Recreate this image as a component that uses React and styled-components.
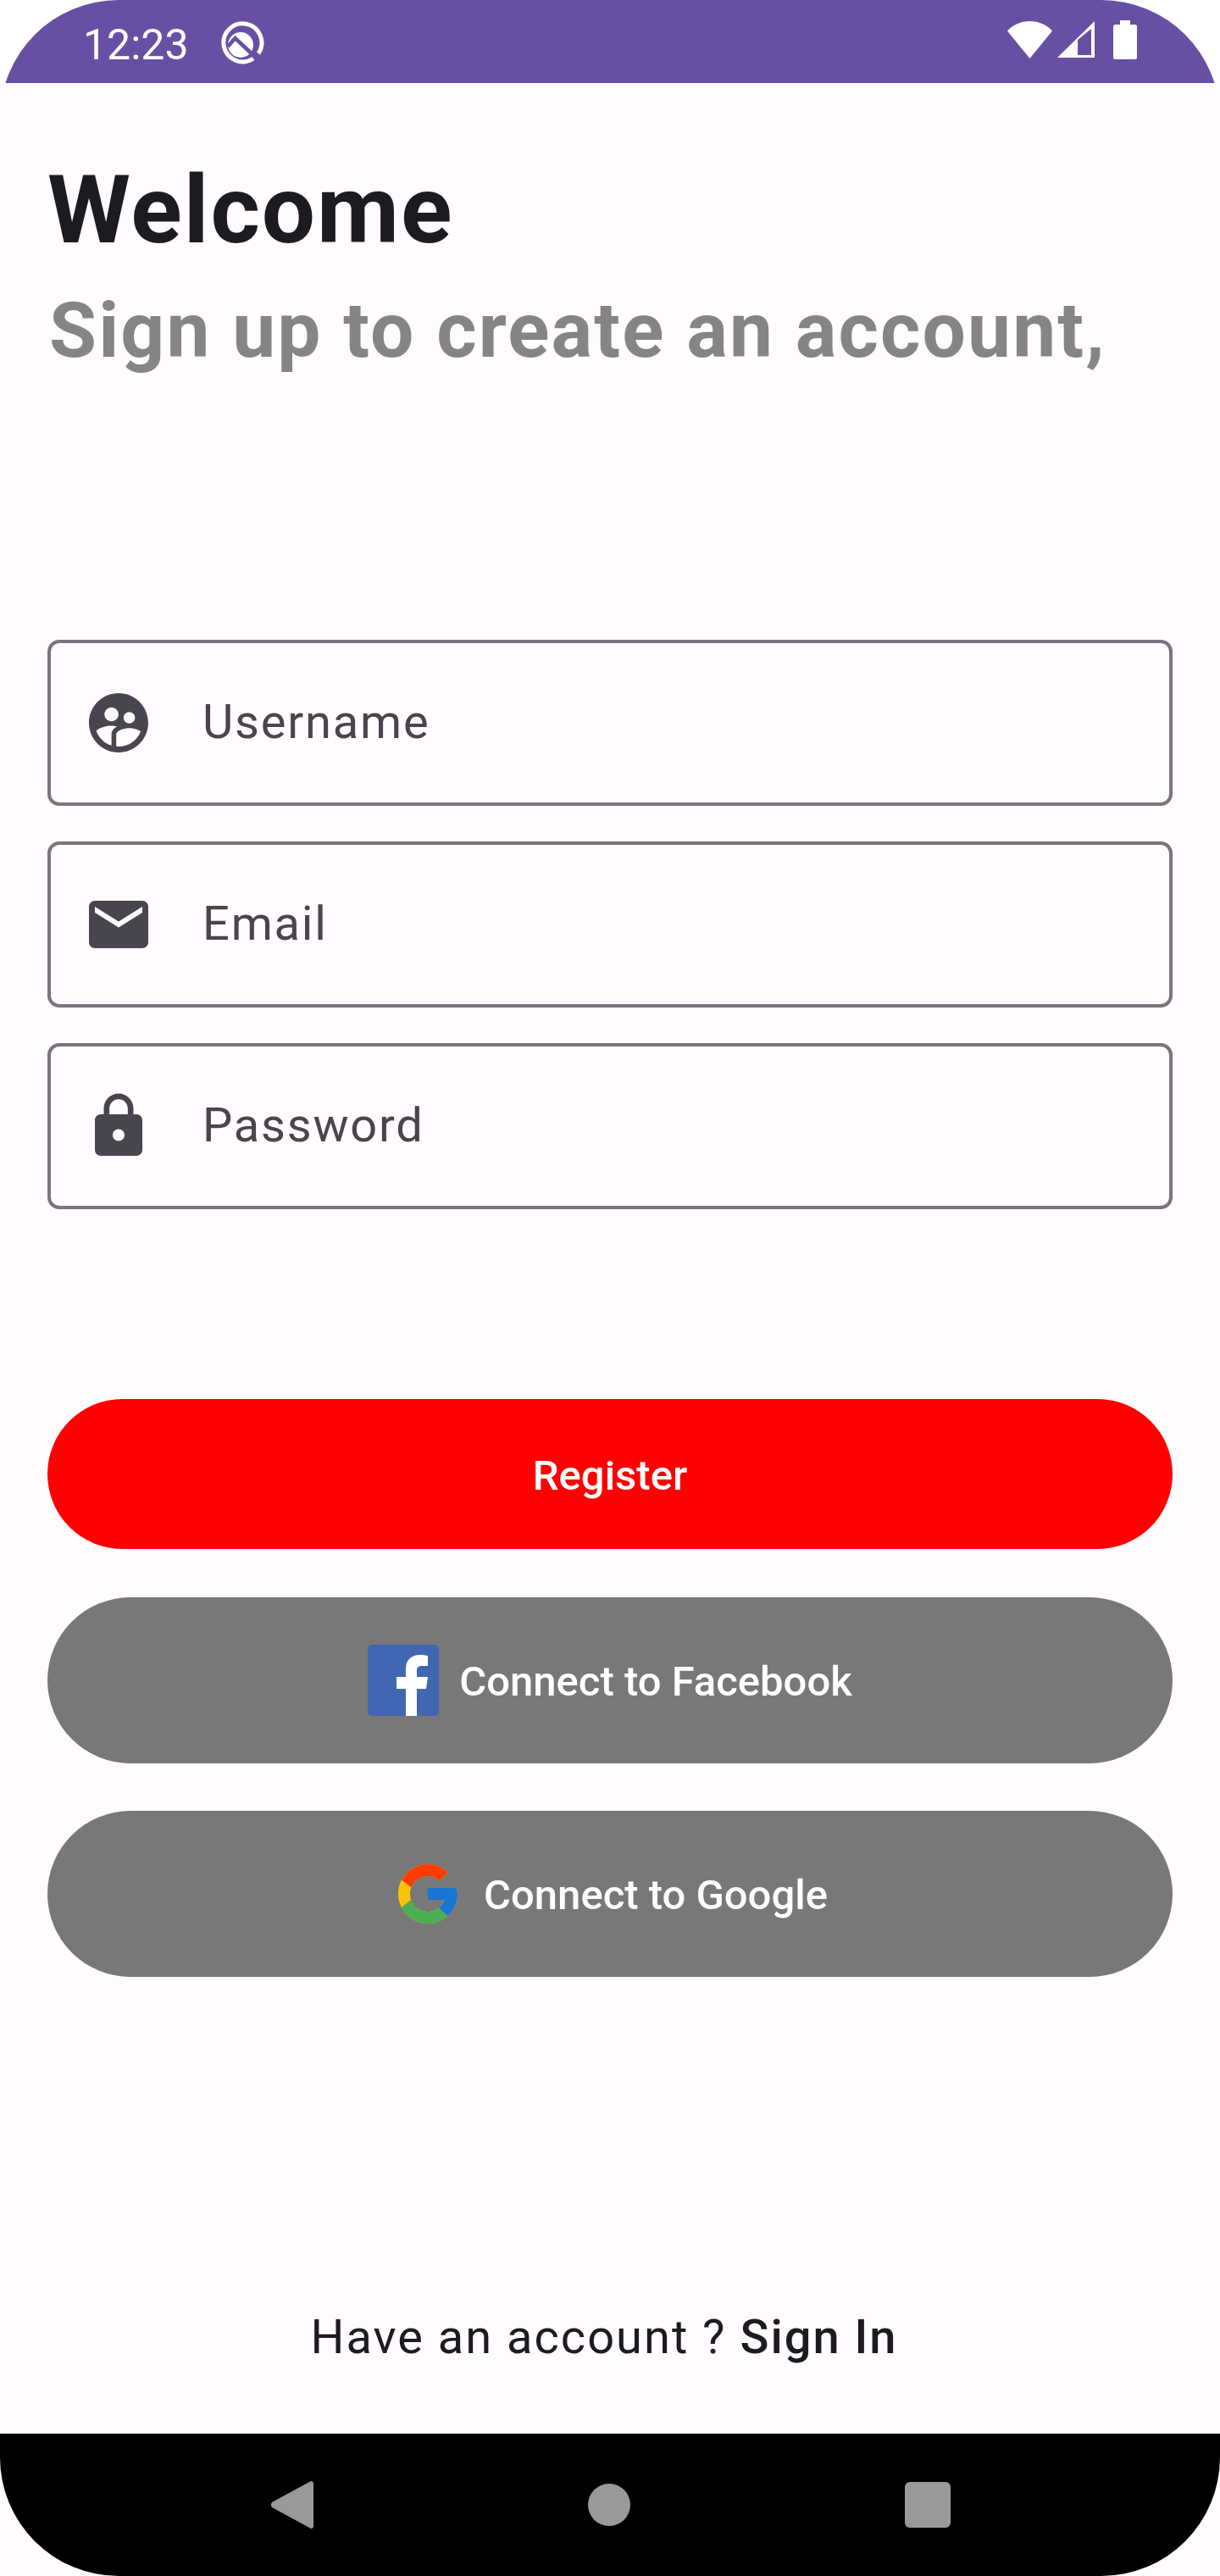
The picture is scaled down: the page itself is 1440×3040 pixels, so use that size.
import styled, { createGlobalStyle } from 'styled-components'
import { MdSupervisedUserCircle, MdEmail, MdLock } from 'react-icons/md'

const GlobalStyle = createGlobalStyle`
	html, body {
		margin: 0;
		padding: 0;
		background: #fff;
	}
	* {
		box-sizing: border-box;
	}
`

const Screen = styled.div`
	display: flex;
	flex-direction: column;
	width: 1440px;
	height: 3040px;
	background: #fffbfe;
	font-family: Roboto, sans-serif;
	overflow: hidden;
`

const StatusClip = styled.div`
	height: 98px;
	flex: none;
	overflow: hidden;
	background: #fff;
`

const StatusBar = styled.div`
	display: flex;
	align-items: flex-start;
	justify-content: space-between;
	height: 140px;
	padding: 25px 98px 0 98px;
	background: #6750a4;
	border-radius: 140px 140px 0 0;
	color: #fff;
`

const StatusLeft = styled.div`
	display: flex;
	align-items: center;
	gap: 33px;
`

const Time = styled.span`
	font-size: 50px;
	line-height: 55px;
`

const StatusRight = styled.div`
	display: flex;
	align-items: center;
	gap: 4px;
	margin-top: -1px;
`

const Main = styled.main`
	display: flex;
	flex-direction: column;
	flex: 1;
	padding: 88px 56px 0;
`

const Title = styled.h1`
	margin: 0;
	font-size: 112px;
	line-height: 123px;
	font-weight: 700;
	letter-spacing: 2px;
	color: #1c1b1f;
`

const Subtitle = styled.h2`
	margin: 28px 0 0 2px;
	font-size: 91px;
	line-height: 106px;
	font-weight: 700;
	letter-spacing: 2.1px;
	color: #858585;
`

const Form = styled.form`
	display: flex;
	flex-direction: column;
	gap: 42px;
	margin-top: 312px;
`

const Field = styled.label`
	display: flex;
	align-items: center;
	gap: 57px;
	height: 196px;
	padding-left: 38px;
	border: 4px solid #79747e;
	border-radius: 14px;
	color: #49454f;
	svg {
		flex: none;
	}
`

const FieldLabel = styled.span`
	padding-bottom: 3px;
	font-size: 56px;
	line-height: 84px;
	letter-spacing: 1.8px;
`

const Actions = styled.div`
	display: flex;
	flex-direction: column;
	margin-top: 224px;
`

const Button = styled.button`
	display: flex;
	align-items: center;
	justify-content: center;
	gap: 24px;
	width: 100%;
	height: ${p => p.$tall ? 196 : 177}px;
	margin-top: ${p => p.$gap || 0}px;
	border: 0;
	border-radius: 98px;
	background: ${p => p.$bg};
	color: #fff;
	font-family: Roboto, sans-serif;
	font-size: 49px;
	font-weight: 500;
	letter-spacing: 0;
`

const ButtonLabel = styled.span`
	padding-top: 3px;
`

const Footer = styled.p`
	margin: auto 0 72px;
	padding-right: 14px;
	text-align: center;
	font-size: 56px;
	line-height: 84px;
	letter-spacing: 2px;
	color: #1c1b1f;
	b {
		font-weight: 500;
	}
`

const NavBar = styled.nav`
	display: flex;
	align-items: center;
	justify-content: center;
	gap: 324px;
	flex: none;
	height: 168px;
	background: #000;
	border-radius: 0 0 140px 140px;
	padding-left: 2px;
`

const QIcon = () => (
	<svg width="56" height="56" viewBox="0 0 56 56" fill="none">
		<path d="M43 44a22.500 22.500 0 1 1 6-6" stroke="#fff" strokeWidth="5" />
		<circle cx="28" cy="28" r="15" fill="#fff" />
		<path d="M13 30l8.500-10L45 42" stroke="#6750a4" strokeWidth="4.500" />
	</svg>
)

const WifiIcon = () => (
	<svg width="54" height="46" viewBox="0 0 54 46">
		<path d="M0 12.500C7 5 16 1 26.500 1S46 5 53 12.500L26.500 45z" fill="#fff" />
	</svg>
)

const SignalIcon = () => (
	<svg width="46" height="46" viewBox="0 0 46 46">
		<path fillRule="evenodd" d="M1 44L45 1v43zM25 23v18h16V10z" fill="#fff" />
	</svg>
)

const BatteryIcon = () => (
	<svg width="28" height="46" viewBox="0 0 28 46" style={{ marginLeft: 17 }}>
		<path d="M8 0h12v5h5.500a2.500 2.500 0 0 1 2.500 2.500v36a2.500 2.500 0 0 1-2.500 2.500h-23a2.500 2.500 0 0 1-2.500-2.500v-36a2.500 2.500 0 0 1 2.500-2.500H8z" fill="#fff" />
	</svg>
)

const FacebookIcon = () => (
	<svg width="84" height="84" viewBox="0 0 84 84">
		<rect width="84" height="84" rx="5" fill="#4267b2" />
		<path d="M45 84V52H34V38h11V28c0-10 7-16 16-16 4 0 8 .5 10 1v12h-7c-5 0-6 2.500-6 6v7h13l-2 14H58v32z" fill="#fff" />
	</svg>
)

const GoogleIcon = () => (
	<svg width="84" height="84" viewBox="0 0 48 48">
		<path fill="#ffc107" d="M43.611 20.083H42V20H24v8h11.303c-1.649 4.657-6.08 8-11.303 8-6.627 0-12-5.373-12-12 0-6.627 5.373-12 12-12 3.059 0 5.842 1.154 7.961 3.039l5.657-5.657C34.046 6.053 29.268 4 24 4 12.955 4 4 12.955 4 24c0 11.045 8.955 20 20 20 11.045 0 20-8.955 20-20 0-1.341-.138-2.650-.389-3.917z" />
		<path fill="#ff3d00" d="M6.306 14.691l6.571 4.819C14.655 15.108 18.961 12 24 12c3.059 0 5.842 1.154 7.961 3.039l5.657-5.657C34.046 6.053 29.268 4 24 4 16.318 4 9.656 8.337 6.306 14.691z" />
		<path fill="#4caf50" d="M24 44c5.166 0 9.860-1.977 13.409-5.192l-6.190-5.238C29.211 35.091 26.715 36 24 36c-5.202 0-9.619-3.317-11.283-7.946l-6.522 5.025C9.505 39.556 16.227 44 24 44z" />
		<path fill="#1976d2" d="M43.611 20.083H42V20H24v8h11.303c-.792 2.237-2.231 4.166-4.087 5.571l6.193 5.236C36.971 39.205 44 34 44 24c0-1.341-.138-2.650-.389-3.917z" />
	</svg>
)

const BackIcon = () => (
	<svg width="50" height="56" viewBox="0 0 50 56">
		<path d="M47 0a3 3 0 0 1 3 3v50a3 3 0 0 1-3 3L1 31a5 5 0 0 1 0-6z" fill="#999" />
	</svg>
)

const HomeIcon = () => (
	<svg width="50" height="50" viewBox="0 0 50 50">
		<circle cx="25" cy="25" r="25" fill="#999" />
	</svg>
)

const RecentIcon = () => (
	<svg width="54" height="54" viewBox="0 0 54 54">
		<rect width="54" height="54" rx="6" fill="#999" />
	</svg>
)

export default function App() {
	return (
		<Screen>
			<GlobalStyle />
			<StatusClip>
				<StatusBar>
					<StatusLeft>
						<Time>12:23</Time>
						<QIcon />
					</StatusLeft>
					<StatusRight>
						<WifiIcon />
						<SignalIcon />
						<BatteryIcon />
					</StatusRight>
				</StatusBar>
			</StatusClip>
			<Main>
				<Title>Welcome</Title>
				<Subtitle>Sign up to create an account,</Subtitle>
				<Form>
					<Field>
						<MdSupervisedUserCircle size={84} />
						<FieldLabel>Username</FieldLabel>
					</Field>
					<Field>
						<MdEmail size={84} />
						<FieldLabel>Email</FieldLabel>
					</Field>
					<Field>
						<MdLock size={84} />
						<FieldLabel>Password</FieldLabel>
					</Field>
				</Form>
				<Actions>
					<Button type="button" $bg="#ff0000"><ButtonLabel>Register</ButtonLabel></Button>
					<Button type="button" $bg="#787878" $tall $gap={57}>
						<FacebookIcon />
						<ButtonLabel>Connect to Facebook</ButtonLabel>
					</Button>
					<Button type="button" $bg="#787878" $tall $gap={56}>
						<GoogleIcon />
						<ButtonLabel>Connect to Google</ButtonLabel>
					</Button>
				</Actions>
				<Footer>Have an account ? <b>Sign In</b></Footer>
			</Main>
			<NavBar>
				<BackIcon />
				<HomeIcon />
				<RecentIcon />
			</NavBar>
		</Screen>
	)
}
